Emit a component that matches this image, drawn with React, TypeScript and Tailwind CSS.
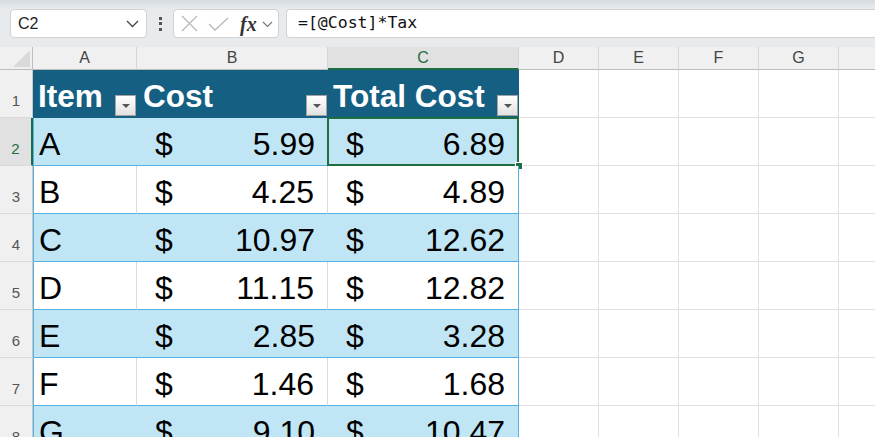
import React from "react";

const rows: [string, string, string][] = [
  ["A", "5.99", "6.89"],
  ["B", "4.25", "4.89"],
  ["C", "10.97", "12.62"],
  ["D", "11.15", "12.82"],
  ["E", "2.85", "3.28"],
  ["F", "1.46", "1.68"],
  ["G", "9.10", "10.47"],
];

function Chevron() {
  return (
    <svg width="13" height="8" viewBox="0 0 13 8">
      <polyline points="1,1 6.5,6.5 12,1" fill="none" stroke="#444" strokeWidth="1.3" />
    </svg>
  );
}

function FilterBtn() {
  return (
    <div className="w-[21px] h-[21px] border border-[#a3a3a3] bg-gradient-to-b from-white to-[#e2e2e2] flex items-center justify-center shrink-0">
      <div className="w-0 h-0 border-l-[4px] border-r-[4px] border-t-[4px] border-l-transparent border-r-transparent border-t-[#555]" />
    </div>
  );
}

function EmptyCells() {
  return (
    <>
      <div className="w-[80px] shrink-0 border-r border-b border-[#e1e1e1]" />
      <div className="w-[80px] shrink-0 border-r border-b border-[#e1e1e1]" />
      <div className="w-[80px] shrink-0 border-r border-b border-[#e1e1e1]" />
      <div className="w-[80px] shrink-0 border-r border-b border-[#e1e1e1]" />
      <div className="flex-1 border-b border-[#e1e1e1]" />
    </>
  );
}

export default function App() {
  return (
    <div className="w-[875px] h-[437px] overflow-hidden bg-white font-['Liberation_Sans',Arial,sans-serif] text-black">
      {/* formula bar */}
      <div className="bg-[#e8ebee]">
        <div className="h-[9px] bg-gradient-to-b from-[#d6dbe0] to-[#e8ebee]" />
        <div className="h-[29px] flex items-stretch">
          <div className="ml-[10px] w-[137px] rounded-[4px] border border-[#d2d2d2] bg-white flex items-center justify-between pl-[7px] pr-[7px]">
            <span className="text-[16px] text-[#222]">C2</span>
            <Chevron />
          </div>
          <div className="w-[26px] flex flex-col items-center justify-center gap-[2.5px]">
            <div className="w-[3px] h-[3px] bg-[#555]" />
            <div className="w-[3px] h-[3px] bg-[#555]" />
            <div className="w-[3px] h-[3px] bg-[#555]" />
          </div>
          <div className="w-[106px] rounded-[4px] border border-[#d2d2d2] bg-white flex items-center pl-[7px]">
            <svg width="17" height="17" viewBox="0 0 17 17">
              <line x1="1" y1="1" x2="16" y2="16" stroke="#b8b8b8" strokeWidth="1.3" />
              <line x1="16" y1="1" x2="1" y2="16" stroke="#b8b8b8" strokeWidth="1.3" />
            </svg>
            <svg className="ml-[10px]" width="21" height="14" viewBox="0 0 21 14">
              <polyline points="1,7 7,13 20,1" fill="none" stroke="#b8b8b8" strokeWidth="1.3" />
            </svg>
            <span className="ml-[11px] font-['Liberation_Serif',serif] italic font-bold text-[20px] text-[#333] leading-none">fx</span>
            <span className="ml-[5px] mt-[2px]">
              <svg width="11" height="7" viewBox="0 0 11 7">
                <polyline points="1,1 5.5,5.5 10,1" fill="none" stroke="#777" strokeWidth="1.2" />
              </svg>
            </span>
          </div>
          <div className="ml-[7px] flex-1 rounded-l-[4px] border border-r-0 border-[#d2d2d2] bg-white flex items-center pl-[11px]">
            <span className="font-['DejaVu_Sans_Mono',monospace] text-[16.5px] text-[#111]">=[@Cost]*Tax</span>
          </div>
        </div>
        <div className="h-[9px]" />
      </div>

      {/* column headers */}
      <div className="flex h-[23px] bg-[#f0f0f0] text-[16px] text-[#444]">
        <div className="w-[33px] shrink-0 border-r border-b border-[#bdbdbd] flex items-end justify-end pr-[2px] pb-[2px]">
          <svg width="17" height="17" viewBox="0 0 17 17">
            <polygon points="17,0 17,17 0,17" fill="#d9d9d9" />
          </svg>
        </div>
        <div className="w-[104px] shrink-0 border-r border-[#d6d6d6] border-b border-b-[#bdbdbd] flex items-center justify-center">A</div>
        <div className="w-[191px] shrink-0 border-r border-[#d6d6d6] border-b border-b-[#bdbdbd] flex items-center justify-center">B</div>
        <div className="w-[191px] shrink-0 bg-[#e1e1e1] text-[#1e6e42] border-r border-[#d6d6d6] border-b-2 border-b-[#1e6e42] flex items-center justify-center">C</div>
        <div className="w-[80px] shrink-0 border-r border-[#d6d6d6] border-b border-b-[#bdbdbd] flex items-center justify-center">D</div>
        <div className="w-[80px] shrink-0 border-r border-[#d6d6d6] border-b border-b-[#bdbdbd] flex items-center justify-center">E</div>
        <div className="w-[80px] shrink-0 border-r border-[#d6d6d6] border-b border-b-[#bdbdbd] flex items-center justify-center">F</div>
        <div className="w-[80px] shrink-0 border-r border-[#d6d6d6] border-b border-b-[#bdbdbd] flex items-center justify-center">G</div>
        <div className="flex-1 border-b border-[#bdbdbd]" />
      </div>

      {/* row 1: table header */}
      <div className="flex h-[48px]">
        <div className="w-[33px] shrink-0 bg-[#f0f0f0] border-r border-[#c8c8c8] border-b border-b-[#dadada] flex items-end justify-center pb-[9px] text-[15px] leading-none text-[#555]">1</div>
        <div className="w-[104px] shrink-0 bg-[#156082] flex items-end justify-between pl-[5px] pr-[1px] pb-[2px]">
          <span className="text-white font-bold text-[31.5px] leading-none mb-[4px]">Item</span>
          <FilterBtn />
        </div>
        <div className="w-[191px] shrink-0 bg-[#156082] flex items-end justify-between pl-[6px] pr-[1px] pb-[2px]">
          <span className="text-white font-bold text-[31.5px] leading-none mb-[4px]">Cost</span>
          <FilterBtn />
        </div>
        <div className="w-[191px] shrink-0 bg-[#156082] flex items-end justify-between pl-[5px] pr-[1px] pb-[2px]">
          <span className="text-white font-bold text-[31.5px] leading-none mb-[4px]">Total Cost</span>
          <FilterBtn />
        </div>
        <EmptyCells />
      </div>

      {rows.map((r, i) => {
        const n = i + 2;
        const band = n % 2 === 0;
        const sel = n === 2;
        const bg = band ? "bg-[#c0e6f5]" : "bg-white";
        return (
          <div key={n} className="flex h-[48px]">
            <div
              className={
                sel
                  ? "w-[33px] shrink-0 bg-[#e1e1e1] border-r-2 border-[#1e6e42] border-b border-b-[#dadada] flex items-end justify-center pb-[9px] text-[15px] leading-none text-[#1e6e42]"
                  : "w-[33px] shrink-0 bg-[#f0f0f0] border-r border-[#c8c8c8] border-b border-b-[#dadada] flex items-end justify-center pb-[9px] text-[15px] leading-none text-[#555]"
              }
            >
              {n}
            </div>
            <div className={`w-[104px] shrink-0 ${bg} border-l border-[#56b2e4] border-b border-b-[#56b2e4] ${band ? "" : "border-r border-r-[#dadada]"} flex items-end pl-[5px] pb-[5px] text-[32px] leading-none`}>
              {r[0]}
            </div>
            <div className={`w-[191px] shrink-0 ${bg} border-b border-[#56b2e4] ${band ? "" : "border-r border-r-[#dadada]"} flex items-end justify-between pl-[18px] pr-[13px] pb-[5px] text-[32px] leading-none`}>
              <span>$</span>
              <span>{r[1]}</span>
            </div>
            <div className={`relative w-[191px] shrink-0 ${bg} border-r border-b border-[#56b2e4] flex items-end justify-between pl-[18px] pr-[13px] pb-[5px] text-[32px] leading-none`}>
              <span>$</span>
              <span>{r[2]}</span>
              {sel && (
                <>
                  <div className="absolute -left-px -top-px -right-px -bottom-px border-2 border-[#1e6e42]" />
                  <div className="absolute -right-[5px] -bottom-[5px] w-[8px] h-[8px] bg-[#1e6e42] border border-white" />
                </>
              )}
            </div>
            <EmptyCells />
          </div>
        );
      })}
    </div>
  );
}
